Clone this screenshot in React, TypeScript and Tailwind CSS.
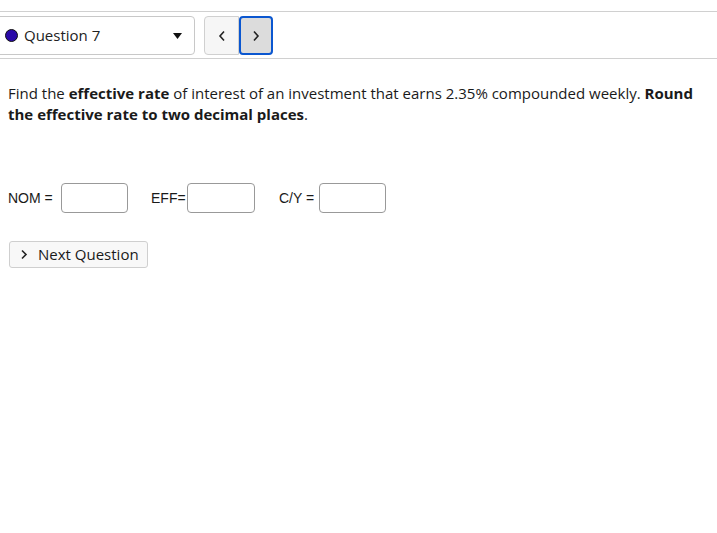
import React from "react";

export default function App() {
  return (
    <div className="w-[717px] h-[533px] bg-white relative overflow-hidden" style={{ fontFamily: '"Open Sans", sans-serif' }}>
      <div className="h-[11px]" />
      <div className="border-t border-[#d0d0d0] border-b h-[48px] flex items-start pt-[4px] gap-[9px]">
        <div className="ml-[-10px] w-[205px] h-[39px] border border-[#c8c8c8] rounded-[4px] flex items-center pl-[14px] pr-[8px]">
          <span className="w-[13px] h-[13px] rounded-full bg-[#2a0aa8] border border-[#111] shrink-0" />
          <span className="ml-[6px] text-[15px] text-[#222] flex-1">Question 7</span>
          <svg width="9" height="6" viewBox="0 0 9 6" className="mr-[4px]"><path d="M0 0 L9 0 L4.5 6 Z" fill="#111" /></svg>
        </div>
        <div className="flex h-[39px]">
          <button className="w-[35px] h-[39px] border border-[#d0d0d0] rounded-l-[4px] bg-[#f6f6f6] flex items-center justify-center">
            <svg width="8" height="12" viewBox="0 0 8 12"><path d="M6 1.5 L2 6 L6 10.5" stroke="#222" strokeWidth="1.6" fill="none" /></svg>
          </button>
          <button className="w-[34px] h-[39px] border-2 border-[#0b57d0] rounded-[4px] bg-[#dcdcdc] flex items-center justify-center">
            <svg width="8" height="12" viewBox="0 0 8 12"><path d="M2 1.5 L6 6 L2 10.5" stroke="#222" strokeWidth="1.6" fill="none" /></svg>
          </button>
        </div>
      </div>
      <p className="px-[8px] mt-[24px] text-[15px] leading-[21px] text-[#1a1a1a]">
        Find the <b>effective rate</b> of interest of an investment that earns 2.35% compounded weekly. <b>Round the effective rate to two decimal places</b>.
      </p>
      <div className="flex items-center mt-[58px] pl-[8px] text-[14px] text-[#1a1a1a]" style={{ fontFamily: '"Liberation Sans", sans-serif' }}>
        <span className="w-[53px]">NOM =</span>
        <span className="w-[67px] h-[30px] border border-[#999] rounded-[4px] bg-white" />
        <span className="ml-[23px] w-[36px]">EFF=</span>
        <span className="w-[68px] h-[30px] border border-[#999] rounded-[4px] bg-white" />
        <span className="ml-[24px] w-[40px]">C/Y =</span>
        <span className="w-[67px] h-[30px] border border-[#999] rounded-[4px] bg-white" />
      </div>
      <button className="mt-[28px] ml-[9px] w-[139px] h-[27px] border border-[#cfcfcf] rounded-[3px] bg-[#f8f8f8] flex items-center pl-[10px] text-[15px] text-[#1a1a1a]">
        <svg width="8" height="11" viewBox="0 0 8 11"><path d="M2 1.5 L6 5.5 L2 9.5" stroke="#222" strokeWidth="1.6" fill="none" /></svg>
        <span className="ml-[10px]">Next Question</span>
      </button>
    </div>
  );
}
